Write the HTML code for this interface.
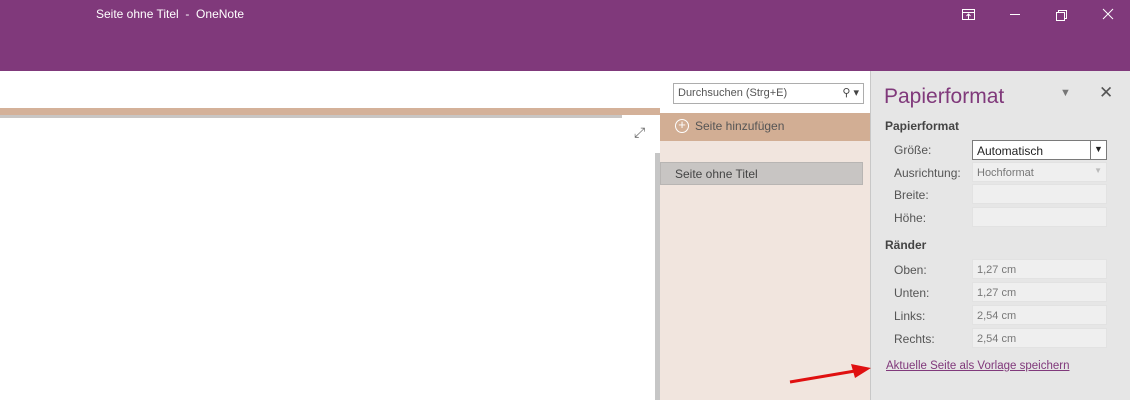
<!DOCTYPE html>
<html><head><meta charset="utf-8"><style>
*{margin:0;padding:0;box-sizing:border-box}
body{width:1130px;height:400px;overflow:hidden;position:relative;background:#fff;font-family:"Liberation Sans","DejaVu Sans",sans-serif;font-size:12px;color:#444}
.a{position:absolute}
.lbl{position:absolute;left:894px;font-size:12px;color:#555}
.box{position:absolute;left:972px;width:135px;height:20px;background:#efefef;border:1px solid #e2e2e2;font-size:11px;color:#777;padding:4px 0 0 4px}
</style></head><body>
<div class="a" style="left:0;top:0;width:1130px;height:71px;background:#80397b"></div>
<div class="a" style="left:96px;top:7px;color:#fff;font-size:12px">Seite ohne Titel&nbsp; - &nbsp;OneNote</div>
<svg class="a" style="left:960px;top:6px" width="170" height="20" fill="none" stroke="#fff" stroke-width="1">
<rect x="2.5" y="3.5" width="12" height="10"/><line x1="2.5" y1="6.5" x2="14.5" y2="6.5"/><path d="M8.5 13V8M6.5 10l2-2 2 2"/>
<line x1="50" y1="8.5" x2="60" y2="8.5"/>
<rect x="96.5" y="6.5" width="8" height="8"/><path d="M98.5 6.5V4.5h8v8h-2"/>
<path d="M143 3l10 10M153 3l-10 10"/></svg>
<div class="a" style="left:0;top:108px;width:660px;height:7px;background:#d4b199"></div>
<div class="a" style="left:0;top:115px;width:622px;height:3px;background:#c9c6c4"></div>
<div class="a" style="left:655px;top:153px;width:5px;height:247px;background:#c6c6c6"></div>
<div class="a" style="left:634px;top:124px;font-size:14px;color:#666">⤢</div>
<div class="a" style="left:673px;top:83px;width:191px;height:21px;border:1px solid #adadad;background:#fff;padding:3px 0 0 4px;font-size:11px;color:#555">Durchsuchen (Strg+E)<span style="position:absolute;right:4px;top:2px;color:#444">⚲ ▾</span></div>
<div class="a" style="left:660px;top:113px;width:210px;height:287px;background:#f1e5de"></div>
<div class="a" style="left:660px;top:113px;width:210px;height:28px;background:#d2ae94"></div>
<div class="a" style="left:675px;top:119px;width:14px;height:14px;border:1.5px solid #fff;border-radius:50%;color:#fff;font-size:13px;line-height:10px;text-align:center">+</div>
<div class="a" style="left:695px;top:119px;color:#555;font-size:12px">Seite hinzufügen</div>
<div class="a" style="left:660px;top:162px;width:203px;height:23px;background:#c8c5c3;border:1px solid #b8b5b3;padding:4px 0 0 14px;color:#444">Seite ohne Titel</div>
<div class="a" style="left:870px;top:71px;width:260px;height:329px;background:#e6e6e6;border-left:1px solid #c8c8c8"></div>
<div class="a" style="left:884px;top:85px;font-size:21px;color:#80397b">Papierformat</div>
<div class="a" style="left:1060px;top:87px;font-size:11px;color:#777">▼</div>
<div class="a" style="left:1099px;top:83px;font-size:17px;color:#555">✕</div>
<div class="a" style="left:885px;top:119px;font-weight:bold;color:#444">Papierformat</div>
<div class="lbl" style="top:143px">Größe:</div>
<div class="a" style="left:972px;top:140px;width:135px;height:20px;background:#fff;border:1px solid #7a7a7a;font-size:12px;color:#222;padding:3px 0 0 4px">Automatisch<span style="position:absolute;right:0;top:0;width:16px;height:18px;border-left:1px solid #7a7a7a;font-size:9px;text-align:center;padding-top:3px">▼</span></div>
<div class="lbl" style="top:166px">Ausrichtung:</div>
<div class="box" style="top:162px">Hochformat<span style="position:absolute;right:4px;top:3px;font-size:8px;color:#bbb">▼</span></div>
<div class="lbl" style="top:188px">Breite:</div><div class="box" style="top:184px"></div>
<div class="lbl" style="top:211px">Höhe:</div><div class="box" style="top:207px"></div>
<div class="a" style="left:885px;top:238px;font-weight:bold;color:#444">Ränder</div>
<div class="lbl" style="top:263px">Oben:</div><div class="box" style="top:259px">1,27 cm</div>
<div class="lbl" style="top:286px">Unten:</div><div class="box" style="top:282px">1,27 cm</div>
<div class="lbl" style="top:309px">Links:</div><div class="box" style="top:305px">2,54 cm</div>
<div class="lbl" style="top:332px">Rechts:</div><div class="box" style="top:328px">2,54 cm</div>
<div class="a" style="left:886px;top:360px;color:#80397b;text-decoration:underline;font-size:11.5px">Aktuelle Seite als Vorlage speichern</div>
<svg class="a" style="left:785px;top:362px" width="90" height="25"><line x1="5" y1="20" x2="70" y2="9" stroke="#e01010" stroke-width="3"/><path d="M86 6L66 2 70 16z" fill="#e01010"/></svg>
</body></html>
